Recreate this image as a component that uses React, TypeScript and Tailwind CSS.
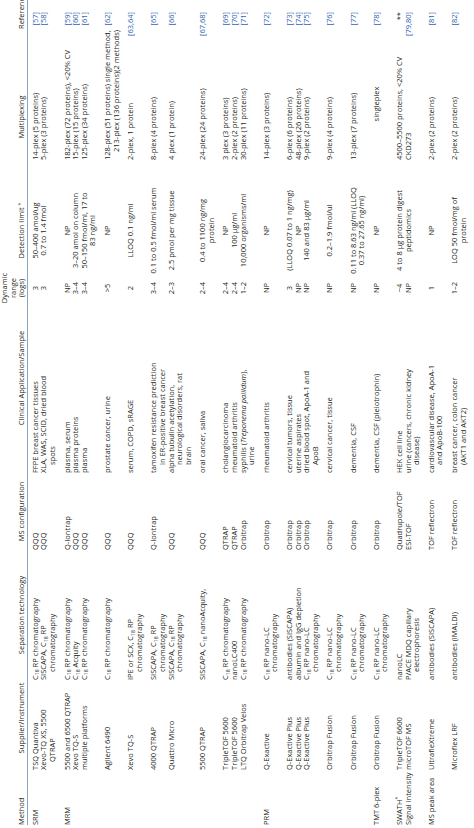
import React from "react";

type L = React.ReactNode;

const C18 = () => (
  <>
    C<span className="relative top-[1.5px] text-[5.2px] leading-[0]">18</span>
  </>
);

interface Row {
  m?: L;
  s: L[];
  sep: L[];
  ms: L;
  clin: L[];
  dyn: L;
  det: L[];
  mult: L[];
  multCenter?: boolean;
  ref: L;
  refDark?: boolean;
  gap?: boolean;
}

const rpChrom: L[] = [<><C18 /> RP chromatography</>];
const siscapaRp: L[] = [<>SISCAPA, <C18 /> RP</>, "chromatography"];
const nanoLc: L[] = [<><C18 /> RP nano-LC</>, "chromatography"];

const rows: Row[] = [
  { m: "SRM", s: ["TSQ Quantiva"], sep: rpChrom, ms: "QQQ", clin: ["FFPE breast cancer tissues"], dyn: "3", det: ["50–400 amol/ug"], mult: ["14-plex (5 proteins)"], ref: "[57]" },
  { s: ["Xevo-TQ XS, 5500", "QTRAP"], sep: siscapaRp, ms: "QQQ", clin: ["XLA, WAS, SCID, dried blood", "spots"], dyn: "3", det: ["0.7 to 1.4 fmol"], mult: ["5-plex (3 proteins)"], ref: "[58]", gap: true },
  { m: "MRM", s: ["5500 and 6500 QTRAP"], sep: rpChrom, ms: "Q-Iontrap", clin: ["plasma, serum"], dyn: "NP", det: ["NP"], mult: ["182-plex (72 proteins), <20% CV"], ref: "[59]" },
  { s: ["Xevo TQ-S"], sep: [<><C18 /> Acquity</>], ms: "QQQ", clin: ["plasma proteins"], dyn: "3–4", det: ["3–20 amol on column"], mult: ["15-plex (15 proteins)"], ref: "[60]" },
  { s: ["multiple platforms"], sep: rpChrom, ms: "QQQ", clin: ["plasma"], dyn: "3–4", det: ["50–150 fmol/ml, 17 to", "83 ng/ml"], mult: ["125-plex (34 proteins)"], ref: "[61]", gap: true },
  { s: ["Agilent 6490"], sep: rpChrom, ms: "QQQ", clin: ["prostate cancer, urine"], dyn: ">5", det: ["NP"], mult: ["128-plex (51 proteins) single method,", "213-plex (136 proteins)(2 methods)"], ref: "[62]", gap: true },
  { s: ["Xevo TQ-S"], sep: [<>IPE or SCX, <C18 /> RP</>, "chromatography"], ms: "QQQ", clin: ["serum, COPD, sRAGE"], dyn: "2", det: ["LLOQ 0.1 ng/ml"], mult: ["2-plex, 1 protein"], ref: "[63,64]", gap: true },
  { s: ["4000 QTRAP"], sep: siscapaRp, ms: "Q-Iontrap", clin: ["tamoxifen resistance prediction", "in ER-positive breast cancer"], dyn: "3–4", det: ["0.1 to 0.5 fmol/ml serum"], mult: ["8-plex (4 proteins)"], ref: "[65]" },
  { s: ["Quattro Micro"], sep: siscapaRp, ms: "QQQ", clin: ["alpha tubulin acetylation,", "neurological disorders, rat", "brain"], dyn: "2–3", det: ["2.5 pmol per mg tissue"], mult: ["4 plex (1 protein)"], ref: "[66]", gap: true },
  { s: ["5500 QTRAP"], sep: [<>SISCAPA, <C18 /> nanoAcquity,</>], ms: "QQQ", clin: ["oral cancer, saliva"], dyn: "2–4", det: ["0.4 to 1100 ng/mg", "protein"], mult: ["24-plex (24 proteins)"], ref: "[67,68]", gap: true },
  { s: ["TripleTOF 5600"], sep: rpChrom, ms: "QTRAP", clin: ["cholangiocarcinoma"], dyn: "2–4", det: ["NP"], mult: ["3 plex (3 proteins)"], ref: "[69]" },
  { s: ["TripleTOF 5600"], sep: ["nanoLC400"], ms: "QTRAP", clin: ["rheumatoid arthritis"], dyn: "2–4", det: ["100 μg/ml"], mult: ["2-plex (2 proteins)"], ref: "[70]" },
  { s: ["LTQ Orbitrap Velos"], sep: rpChrom, ms: "Orbitrap", clin: [<>syphilis (<i>Treponema pallidum</i>),</>, "urine"], dyn: "1–2", det: ["10,000 organisms/ml"], mult: ["30-plex (11 proteins)"], ref: "[71]", gap: true },
  { m: "PRM", s: ["Q-Exactive"], sep: nanoLc, ms: "Orbitrap", clin: ["rheumatoid arthritis"], dyn: "NP", det: ["NP"], mult: ["14-plex (3 proteins)"], ref: "[72]", gap: true },
  { s: ["Q-Exactive Plus"], sep: ["antibodies (SISCAPA)"], ms: "Orbitrap", clin: ["cervical tumors, tissue"], dyn: "3", det: ["(LLOQ 0.07 to 1 ng/mg)"], mult: ["6-plex (6 proteins)"], ref: "[73]" },
  { s: ["Q-Exactive Plus"], sep: ["albumin and IgG depletion"], ms: "Orbitrap", clin: ["uterine aspirates"], dyn: "NP", det: ["NP"], mult: ["48-plex (26 proteins)"], ref: "[74]" },
  { s: ["Q-Exactive Plus"], sep: nanoLc, ms: "Orbitrap", clin: ["dried blood spot, ApoA-1 and", "ApoB"], dyn: "NP", det: ["140 and 83 μg/ml"], mult: ["9-plex (2 proteins)"], ref: "[75]", gap: true },
  { s: ["Orbitrap Fusion"], sep: nanoLc, ms: "Orbitrap", clin: ["cervical cancer, tissue"], dyn: "NP", det: ["0.2–1.9 fmol/ul"], mult: ["9-plex (4 proteins)"], ref: "[76]", gap: true },
  { s: ["Orbitrap Fusion"], sep: nanoLc, ms: "Orbitrap", clin: ["dementia, CSF"], dyn: "NP", det: ["0.11 to 8.63 ng/ml (LLOQ", "0.37 to 27.65 ng/ml)"], mult: ["13-plex (7 proteins)"], ref: "[77]", gap: true },
  { m: "TMT 6-plex", s: ["Orbitrap Fusion"], sep: nanoLc, ms: "Orbitrap", clin: ["dementia, CSF (pleiotrophin)"], dyn: "NP", det: ["NP"], mult: ["singleplex"], multCenter: true, ref: "[78]", gap: true },
  { m: <>SWATH<sup className="text-[5px]">*</sup></>, s: ["TripleTOF 6600"], sep: ["nanoLC"], ms: "Quadrupole/TOF", clin: ["HEK cell line"], dyn: "~4", det: ["4 to 8 μg protein digest"], mult: ["4500–5500 proteins, <20% CV"], ref: "**", refDark: true },
  { m: "Signal intensity", s: ["microTOF MS"], sep: ["P/ACE MDQ capillary", "electrophoresis"], ms: "ESI-TOF", clin: ["urine (cancers, chronic kidney", "disease)"], dyn: "NP", det: ["peptidomics"], mult: ["CKD273"], ref: "[79,80]", gap: true },
  { m: "MS peak area", s: ["UltrafleXtreme"], sep: ["antibodies (SISCAPA)"], ms: "TOF reflectron", clin: ["cardiovascular disease, ApoA-1", "and ApoB-100"], dyn: "1", det: ["NP"], mult: ["2-plex (2 proteins)"], ref: "[81]", gap: true },
  { s: ["Microflex LRF"], sep: ["antibodies (iMALDI)"], ms: "TOF reflectron", clin: ["breast cancer, colon cancer", "(AKT1 and AKT2)"], dyn: "1–2", det: ["LOQ 50 fmol/mg of", "protein"], mult: ["2-plex (2 proteins)"], ref: "[82]" },
];

function Hang({ lines }: { lines: L[] }) {
  return (
    <div className="flex flex-col">
      {lines.map((l, i) => (
        <div key={i} className={i > 0 ? "whitespace-nowrap pl-[8px]" : "whitespace-nowrap"}>
          {l}
        </div>
      ))}
    </div>
  );
}

function Center({ lines }: { lines: L[] }) {
  return (
    <div className="flex flex-col items-center">
      {lines.map((l, i) => (
        <div key={i} className="whitespace-nowrap">
          {l}
        </div>
      ))}
    </div>
  );
}

const GRID = "grid grid-cols-[55px_90px_130px_77px_160px_50px_65px_150px_36px]";

export default function App() {
  return (
    <div className="relative h-[828px] w-[474px] overflow-hidden bg-white">
      <div className="absolute left-0 top-[828px] h-[474px] w-[828px] origin-top-left -rotate-90 pl-[3px] font-['Open_Sans',sans-serif] text-[7.5px] leading-[8.6px] text-[#231f20]">
        {/* header */}
        <div className={`${GRID} items-end border-b border-[#8ea3c8] pb-[1px]`}>
          <div className="whitespace-nowrap">Method</div>
          <div className="whitespace-nowrap pl-[14px] text-center">Supplier/Instrument</div>
          <div className="whitespace-nowrap text-center">Separation technology</div>
          <div className="whitespace-nowrap text-center">MS configuration</div>
          <div className="whitespace-nowrap pl-[30px] text-center">Clinical Application/Sample</div>
          <Center lines={["Dynamic", "range", "(logs)"]} />
          <div className="flex justify-center">
            <div className="whitespace-nowrap">
              Detection limit <sup className="text-[5px]">*</sup>
            </div>
          </div>
          <div className="whitespace-nowrap pl-[12px] text-center">Multiplexing</div>
          <div className="whitespace-nowrap pl-[19px]">Reference</div>
        </div>
        {/* body */}
        <div className="flex flex-col pt-[3px]">
          {rows.map((r, i) => (
            <div key={i} className={r.gap ? `${GRID} pb-[6px]` : GRID}>
              <div className="whitespace-nowrap">{r.m}</div>
              <Hang lines={r.s} />
              <Hang lines={r.sep} />
              <div className="whitespace-nowrap">{r.ms}</div>
              <Hang lines={r.clin} />
              <Center lines={[r.dyn]} />
              <Center lines={r.det} />
              <div className="pl-[38px]">
                {r.multCenter ? <Center lines={r.mult} /> : <Hang lines={r.mult} />}
              </div>
              <div className={r.refDark ? "whitespace-nowrap text-right" : "whitespace-nowrap text-right text-[#2f64b0]"}>
                {r.ref}
              </div>
            </div>
          ))}
        </div>
      </div>
    </div>
  );
}
